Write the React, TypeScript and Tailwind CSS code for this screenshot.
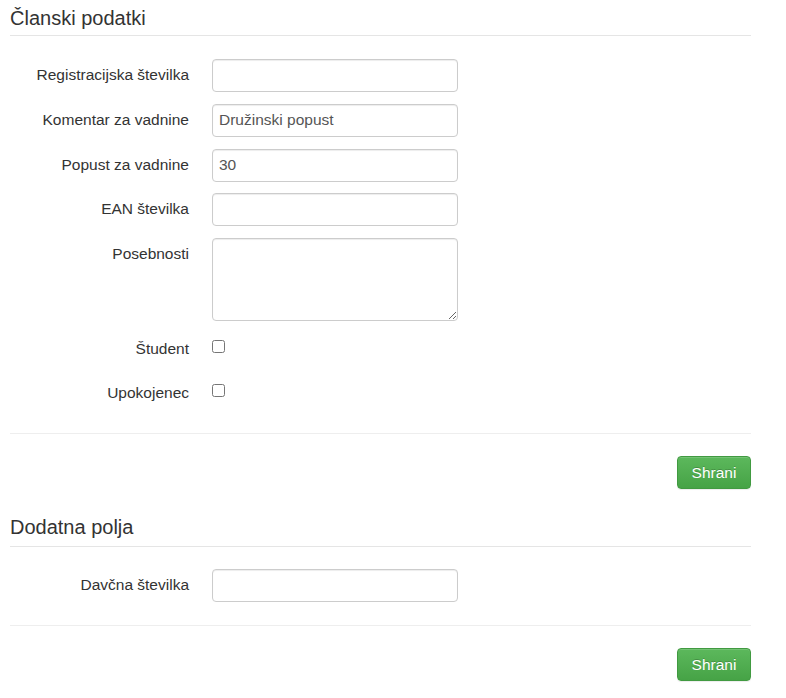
import React from "react";

const font = "font-['Liberation_Sans',Arial,Helvetica,sans-serif]";

function FieldRow({ label, children, last }: { label: string; children: React.ReactNode; last?: boolean }) {
  return (
    <div className={`flex items-start ${last ? "" : "mb-[11.75px]"}`}>
      <label className="w-[179px] shrink-0 text-right pt-[6px] text-[15.5px] leading-[20px] text-[#333]">{label}</label>
      <div className="ml-[23px]">{children}</div>
    </div>
  );
}

function TextInput({ value }: { value?: string }) {
  return (
    <input
      type="text"
      defaultValue={value}
      className="block w-[246px] h-[33px] px-[6px] border border-[#ccc] rounded-[4px] bg-white text-[15.5px] text-[#555] shadow-[inset_0_1px_1px_rgba(0,0,0,0.075)] outline-none"
    />
  );
}

function CheckRow({ label, last }: { label: string; last?: boolean }) {
  return (
    <div className={`flex items-start h-[33px] ${last ? "" : "mb-[11px]"}`}>
      <label className="w-[179px] shrink-0 text-right pt-[6px] text-[15.5px] leading-[20px] text-[#333]">{label}</label>
      <input type="checkbox" className="ml-[23px] mt-[7px] w-[13px] h-[13px] m-0" />
    </div>
  );
}

function SaveButton() {
  return (
    <div className="flex justify-end">
      <button className="h-[33px] w-[74px] rounded-[4px] border border-[#419a41] bg-gradient-to-b from-[#5cb85c] to-[#46a346] text-white text-[15.5px] [text-shadow:0_-1px_0_rgba(0,0,0,0.2)] shadow-[inset_0_1px_0_rgba(255,255,255,0.15),0_1px_1px_rgba(0,0,0,0.075)]">
        Shrani
      </button>
    </div>
  );
}

export default function App() {
  return (
    <div className={`${font} w-[786px] min-h-[698px] bg-white pl-[10px]`}>
      <div className="w-[741px]">
        <h2 className="pt-[7px] pb-[6px] text-[20px] leading-[22px] text-[#333] border-b border-[#e5e5e5]">Članski podatki</h2>

        <div className="mt-[23px]">
          <FieldRow label="Registracijska številka">
            <TextInput />
          </FieldRow>
          <FieldRow label="Komentar za vadnine">
            <TextInput value="Družinski popust" />
          </FieldRow>
          <FieldRow label="Popust za vadnine">
            <TextInput value="30" />
          </FieldRow>
          <FieldRow label="EAN številka">
            <TextInput />
          </FieldRow>
          <FieldRow label="Posebnosti">
            <textarea className="block w-[246px] h-[83px] px-[6px] py-[4px] border border-[#ccc] rounded-[4px] bg-white text-[15.5px] text-[#555] shadow-[inset_0_1px_1px_rgba(0,0,0,0.075)] outline-none" />
          </FieldRow>
          <CheckRow label="Študent" />
          <CheckRow label="Upokojenec" last />
        </div>

        <hr className="mt-[23px] mb-[22px] border-0 border-t border-[#eee]" />
        <SaveButton />

        <h2 className="mt-[20px] pt-[7px] pb-[8px] text-[20px] leading-[22px] text-[#333] border-b border-[#e5e5e5]">Dodatna polja</h2>

        <div className="mt-[22px]">
          <FieldRow label="Davčna številka" last>
            <TextInput />
          </FieldRow>
        </div>

        <hr className="mt-[23px] mb-[22px] border-0 border-t border-[#eee]" />
        <SaveButton />
      </div>
    </div>
  );
}
